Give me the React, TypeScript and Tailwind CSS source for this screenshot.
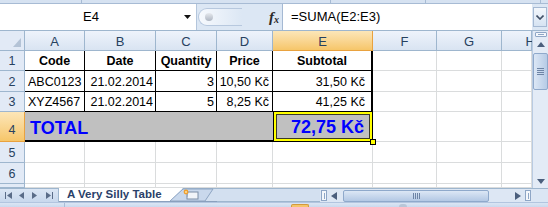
import React from 'react';

const cols = 'grid grid-cols-[25px_60px_71px_61px_56px_100px_64px_65px_30px]';
const base = 'flex items-end pb-[1px] leading-[15px] whitespace-nowrap overflow-hidden';
const grid = 'border-r border-b border-[#dadcdd]';
const line = 'border-r border-b border-black';
const colHead =
  'flex items-end justify-center pb-[1px] leading-[15px] border-r border-b border-[#9eb6ce] bg-linear-to-b from-[#eef3fb] to-[#d9e4f2] text-[#27415f]';
const colHeadSel =
  'flex items-end justify-center pb-[1px] leading-[15px] border-r border-b border-[#e9a23f] bg-linear-to-b from-[#fce6b8] to-[#f6c669] text-[#27415f]';
const rowHead =
  'flex items-end justify-center pb-[1px] leading-[15px] border-r border-b border-[#9eb6ce] bg-[#e2eaf6] text-[#27415f]';
const rowHeadSel =
  'flex items-end justify-center pb-[3px] leading-[15px] border-r border-b border-[#e9a23f] bg-linear-to-b from-[#fce6b8] to-[#f6c669] text-[#27415f]';

function Empty() {
  return (
    <>
      <div className={grid} />
      <div className={grid} />
      <div className={grid} />
    </>
  );
}

function DataRow({ n, h, cells }: { n: number; h: string; cells: string[] }) {
  return (
    <div className={`${cols} ${h}`}>
      <div className={rowHead}>{n}</div>
      <div className={`${base} ${line} pl-[3px]`}>{cells[0]}</div>
      <div className={`${base} ${line} justify-end pr-[2px]`}>{cells[1]}</div>
      <div className={`${base} ${line} justify-end pr-[2px]`}>{cells[2]}</div>
      <div className={`${base} ${line} justify-end pr-[3px]`}>{cells[3]}</div>
      <div className={`${base} border-b border-r-2 border-black justify-end pr-[6px]`}>{cells[4]}</div>
      <Empty />
    </div>
  );
}

function BlankRow({ n, h }: { n?: number; h: string }) {
  return (
    <div className={`${cols} ${h} overflow-hidden`}>
      <div className={rowHead}>{n}</div>
      <div className={grid} />
      <div className={grid} />
      <div className={grid} />
      <div className={grid} />
      <div className={grid} />
      <Empty />
    </div>
  );
}

function VScroll() {
  return (
    <div className="w-[16px] flex flex-col items-center bg-[#e3ebf6] border-l border-[#b9cbe2]">
      <div className="mt-[1px] w-[12px] h-[5px] rounded-[1px] border border-[#8ea6c6] bg-[#f4f7fb] flex items-center justify-center">
        <div className="w-[6px] h-px bg-[#8ea6c6]" />
      </div>
      <div className="h-[14px] w-full flex items-center justify-center">
        <svg width="8" height="5" viewBox="0 0 8 5">
          <path d="M4 0 L8 5 L0 5 Z" fill="#4b5f7d" />
        </svg>
      </div>
      <div className="mt-[2px] w-[15px] h-[37px] rounded-[2px] border border-[#8fa9cb] bg-linear-to-r from-[#dce7f5] to-[#b6cbe6] flex flex-col items-center justify-center gap-[1px]">
        <div className="w-[7px] h-px bg-[#6d84a5]" />
        <div className="w-[7px] h-px bg-[#6d84a5]" />
        <div className="w-[7px] h-px bg-[#6d84a5]" />
        <div className="w-[7px] h-px bg-[#6d84a5]" />
      </div>
      <div className="flex-1" />
      <div className="h-[14px] w-full flex items-center justify-center">
        <svg width="8" height="5" viewBox="0 0 8 5">
          <path d="M0 0 L8 0 L4 5 Z" fill="#4b5f7d" />
        </svg>
      </div>
    </div>
  );
}

export default function App() {
  return (
    <div className="w-[548px] h-[207px] overflow-hidden bg-white font-['Liberation_Sans',Arial,sans-serif] text-[12.5px] text-black">
      {/* ribbon edge */}
      <div className="flex h-[4px] bg-[#d6e2f1] border-b border-[#a7bbd4]">
        <div className="w-[82px] border-r border-[#a7bbd4]" />
        <div className="w-[249px] border-r border-[#a7bbd4]" />
        <div className="w-[95px] border-r border-[#a7bbd4]" />
        <div className="w-[115px] border-r border-[#a7bbd4]" />
      </div>

      {/* formula bar */}
      <div className="flex h-[27px] bg-[#dce7f4] border-b border-[#9eb6ce] text-[13px]">
        <div className="w-[197px] bg-white flex items-center border-r border-[#b4c6dc]">
          <span className="pl-[83px]">E4</span>
          <svg className="ml-auto mr-[5px]" width="7" height="4" viewBox="0 0 7 4">
            <path d="M0 0 L7 0 L3.5 4 Z" fill="#111" />
          </svg>
        </div>
        <div className="ml-[1px] mt-[4px] h-[18px] w-[44px] rounded-l-full border border-r-0 border-[#b7c8de] bg-linear-to-r from-[#f6f9fd] to-[#dce7f4] flex items-center">
          <div className="ml-[6px] w-[8px] h-[8px] rounded-full bg-linear-to-b from-[#e6e9ee] to-[#aeb6c2]" />
        </div>
        <div className="ml-auto mr-[3px] flex items-center font-['Liberation_Serif',serif] italic font-bold text-[15px] text-[#2a2a2a]">
          f<span className="text-[10px] mt-[4px]">x</span>
        </div>
        <div className="w-[250px] bg-white border-l border-[#a5b9d3] flex items-center pl-[8px]">
          =SUMA(E2:E3)
        </div>
        <div className="w-[16px] flex items-center justify-center">
          <div className="w-[14px] h-[20px] border border-[#a5b9d3] bg-linear-to-b from-[#f3f7fc] to-[#d6e3f2] flex items-center justify-center">
            <svg width="8" height="5" viewBox="0 0 8 5">
              <path d="M0.5 0.5 L4 4 L7.5 0.5" stroke="#3f4f66" strokeWidth="1.6" fill="none" />
            </svg>
          </div>
        </div>
      </div>

      {/* sheet */}
      <div className="flex">
        <div className="w-[532px]">
          <div className={`${cols} h-[20px] text-[13px]`}>
            <div className="relative border-r border-b border-[#9eb6ce] bg-[#e2eaf6]">
              <svg className="absolute right-[3px] bottom-[3px]" width="8" height="9" viewBox="0 0 8 9">
                <path d="M8 0 L8 9 L0 9 Z" fill="#b4c3d6" />
              </svg>
            </div>
            <div className={colHead}>A</div>
            <div className={colHead}>B</div>
            <div className={colHead}>C</div>
            <div className={colHead}>D</div>
            <div className={colHeadSel}>E</div>
            <div className={colHead}>F</div>
            <div className={colHead}>G</div>
            <div className={`${colHead} justify-end`}>
              <span className="-mr-[4px]">H</span>
            </div>
          </div>

          <div className={`${cols} h-[20px]`}>
            <div className={rowHead}>1</div>
            <div className={`${base} ${line} justify-center font-bold`}>Code</div>
            <div className={`${base} ${line} justify-center font-bold`}>Date</div>
            <div className={`${base} ${line} justify-center font-bold`}>Quantity</div>
            <div className={`${base} ${line} justify-center font-bold`}>Price</div>
            <div className={`${base} border-b border-r-2 border-black justify-center font-bold`}>Subtotal</div>
            <Empty />
          </div>

          <DataRow n={2} h="h-[21px]" cells={['ABC0123', '21.02.2014', '3', '10,50 Kč', '31,50 Kč']} />
          <DataRow n={3} h="h-[20px]" cells={['XYZ4567', '21.02.2014', '5', '8,25 Kč', '41,25 Kč']} />

          <div className={`${cols} h-[30px]`}>
            <div className={rowHeadSel}>4</div>
            <div className="col-span-4 flex items-end pb-[2px] pl-[5px] leading-[20px] bg-[#c0c0c0] border-b-2 border-black text-[18px] font-bold text-[#0000ff]">
              TOTAL
            </div>
            <div className="relative border-x border-b border-black">
              <div className="h-full border-2 border-[#ffff00]">
                <div className="h-full border border-[#3a3a2a] bg-[#c0c0c0] flex items-end justify-end pr-[5px] pb-[1px] leading-[20px] text-[18px] font-bold text-[#0000ff]">
                  72,75 Kč
                </div>
              </div>
              <div className="absolute -right-[4px] -bottom-[4px] z-10 w-[6px] h-[6px] bg-[#ffff00] border border-black" />
            </div>
            <Empty />
          </div>

          <BlankRow n={5} h="h-[21px]" />
          <BlankRow n={6} h="h-[21px]" />
          <BlankRow h="h-[4px]" />
        </div>
        <VScroll />
      </div>

      {/* sheet tabs + horizontal scrollbar */}
      <div className="flex h-[14px] bg-[#d3e0f0]">
        <div className="w-[59px] border-t border-r border-[#9eb6ce] bg-linear-to-b from-[#dbe6f4] to-[#c8d8ed] flex items-center">
          <svg width="58" height="13" viewBox="0 0 58 13">
            <rect x="5" y="3" width="1" height="7" fill="#5a6c88" />
            <path d="M12 3 L7 6.5 L12 10 Z" fill="#5a6c88" />
            <path d="M24 3 L19 6.5 L24 10 Z" fill="#5a6c88" />
            <path d="M32 3 L37 6.5 L32 10 Z" fill="#5a6c88" />
            <path d="M46 3 L51 6.5 L46 10 Z" fill="#5a6c88" />
            <rect x="52" y="3" width="1" height="7" fill="#5a6c88" />
          </svg>
        </div>
        <div className="w-[108px] bg-white border-b border-[#8aa0bd] flex items-center pl-[8px] text-[11.5px] font-bold text-[#2a3f69] leading-none whitespace-nowrap">
          A Very Silly Table
        </div>
        <svg width="50" height="14" viewBox="0 0 50 14" className="shrink-0">
          <rect x="0" y="0" width="50" height="1" fill="#9eb6ce" />
          <path d="M0 0 L16 0 L3 13 L0 13 Z" fill="#ffffff" />
          <path d="M3 13 L16 1 L46 1 L38 13 Z" fill="#c9d8ec" stroke="#8ea5c3" strokeWidth="1" />
          <rect x="20" y="4" width="11" height="7" fill="#f2f5f9" stroke="#7d8ea6" strokeWidth="1" />
          <path d="M21 4 L20 9" stroke="#9aa9bd" strokeWidth="1" />
          <circle cx="19" cy="4" r="2.4" fill="#f0a030" />
          <circle cx="19" cy="4" r="1" fill="#fde3a0" />
          <rect x="0" y="13" width="50" height="1" fill="#8aa0bd" />
        </svg>
        <div className="w-[103px] border-t border-b border-[#9eb6ce]" />
        {/* horizontal scrollbar */}
        <div className="flex-1 flex items-center border-t border-[#9eb6ce] bg-[#dde7f4]">
          <div className="ml-[1px] w-[6px] h-[11px] border border-[#8ea6c6] bg-[#f4f7fb] flex items-center justify-center">
            <div className="w-px h-[6px] bg-[#8ea6c6]" />
          </div>
          <svg className="ml-[4px]" width="6" height="8" viewBox="0 0 6 8">
            <path d="M6 0 L0 4 L6 8 Z" fill="#4b5f7d" />
          </svg>
          <div className="ml-[6px] w-[146px] h-[12px] rounded-[2px] border border-[#8fa9cb] bg-linear-to-b from-[#dce7f5] to-[#b3c8e4] flex items-center justify-center gap-[1px]">
            <div className="w-px h-[6px] bg-[#6d84a5]" />
            <div className="w-px h-[6px] bg-[#6d84a5]" />
            <div className="w-px h-[6px] bg-[#6d84a5]" />
            <div className="w-px h-[6px] bg-[#6d84a5]" />
          </div>
          <svg className="ml-auto" width="6" height="8" viewBox="0 0 6 8">
            <path d="M0 0 L6 4 L0 8 Z" fill="#4b5f7d" />
          </svg>
          <div className="ml-[4px] mr-[1px] w-[6px] h-[11px] border border-[#8ea6c6] bg-[#f4f7fb] flex items-center justify-center">
            <div className="w-px h-[6px] bg-[#8ea6c6]" />
          </div>
        </div>
        <div className="w-[16px] border-t border-[#9eb6ce] bg-[#dbe6f4]" />
      </div>

      {/* status bar edge */}
      <div className="flex h-[5px] bg-linear-to-b from-[#dbe6f4] to-[#c9d9ee] border-t border-[#b2c5df]">
        <div className="w-[65px] border-r border-[#a9bcd6]" />
        <div className="w-[226px]" />
        <div className="mt-[1px] w-[18px] h-[3px] rounded-t-[2px] bg-[#f5c56a] border border-b-0 border-[#d39a3c]" />
        <div className="w-[90px]" />
        <div className="mt-[1px] w-[8px] h-[3px] rounded-t-full bg-[#b8c6d8]" />
      </div>
    </div>
  );
}
